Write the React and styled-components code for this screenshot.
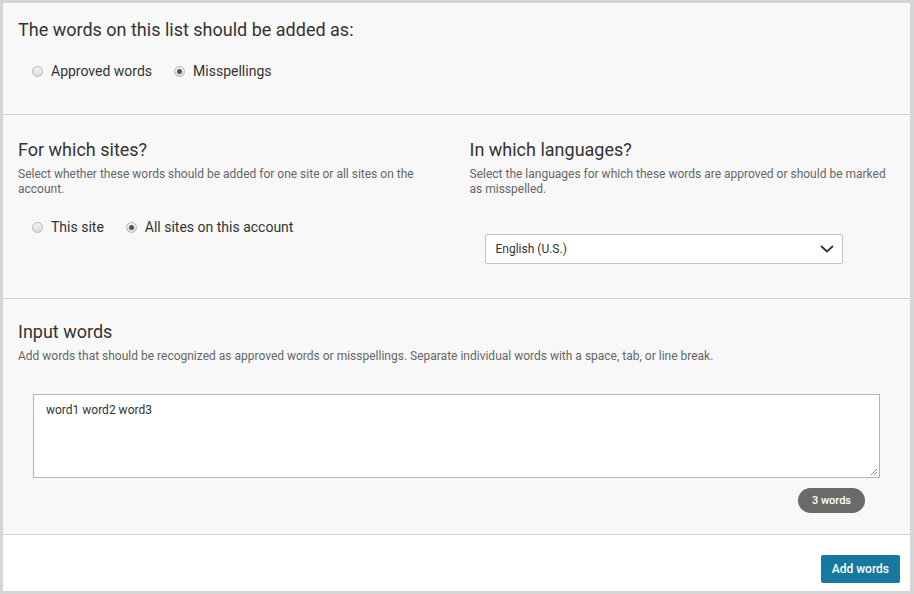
import React from "react";
import styled, { createGlobalStyle } from "styled-components";

const Global = createGlobalStyle`
  html, body { margin: 0; padding: 0; background: #d6d6d6; }
  body { font-family: Roboto, "Liberation Sans", sans-serif; color: #333; }
`;

const Frame = styled.div`
  width: 907px; height: 588px; margin: 3px;
  background: #f8f8f8; display: flex; flex-direction: column;
`;
const Section = styled.section`
  padding: ${p => p.$pad || "16px 15px 0"};
  height: ${p => p.$h}px; box-sizing: border-box;
  border-bottom: 1px solid #d2d2d2;
  display: ${p => (p.$cols ? "grid" : "block")};
  grid-template-columns: 1fr 1fr; column-gap: 60px;
`;
const Title = styled.h2`
  margin: 0; font-size: 18px; font-weight: 400; color: #333; line-height: 22px;
`;
const Desc = styled.p`
  margin: 6px 0 0; font-size: 12px; line-height: 15px; color: #666;
`;
const RadioRow = styled.div`
  display: flex; gap: 22px; padding-left: 14px; margin-top: ${p => p.$mt}px;
`;
const RadioLabel = styled.label`
  display: flex; align-items: center; gap: 8px; font-size: 14px; color: #333;
`;
const Dot = styled.span`
  width: 11px; height: 11px; border-radius: 50%; box-sizing: border-box;
  border: 1px solid #b8b8b8; background: linear-gradient(#f4f4f4, #dcdcdc);
  display: flex; align-items: center; justify-content: center;
  &::after { content: ""; width: 5px; height: 5px; border-radius: 50%;
    background: ${p => (p.$on ? "#555" : "transparent")}; }
`;
const Select = styled.div`
  margin: 38px 0 0 15px; width: 358px; height: 30px; box-sizing: border-box;
  border: 1px solid #c4c4c4; border-radius: 2px; background: #fff;
  display: flex; align-items: center; justify-content: space-between;
  padding: 0 8px 0 10px; font-size: 12px; color: #333;
`;
const TextArea = styled.div`
  margin: 30px 0 0 15px; width: 847px; height: 84px; box-sizing: border-box;
  border: 1px solid #b4b4b4; background: #fff; padding: 8px 12px;
  font-size: 12px; color: #333; position: relative;
`;
const Grip = styled.svg`position: absolute; right: 1px; bottom: 1px;`;
const CountRow = styled.div`display: flex; justify-content: flex-end; margin: 10px 30px 0 0;`;
const Pill = styled.span`
  background: #6a6a6a; color: #fff; font-size: 11px; font-weight: 500;
  height: 25px; padding: 0 14px; border-radius: 13px; display: flex; align-items: center;
`;
const Footer = styled.div`
  flex: 1; background: #fff; display: flex; justify-content: flex-end;
  align-items: flex-start; padding: 20px 10px 0 0;
`;
const Button = styled.button`
  background: #16799f; color: #fff; border: 0; border-radius: 2px;
  height: 28px; padding: 0 11px; font-family: inherit; font-size: 12px; font-weight: 500;
`;

const Radio = ({ on, children }) => (
  <RadioLabel><Dot $on={on} />{children}</RadioLabel>
);

export default function App() {
  return (
    <>
      <Global />
      <Frame>
        <Section $h={112}>
          <Title>The words on this list should be added as:</Title>
          <RadioRow $mt={22}>
            <Radio>Approved words</Radio>
            <Radio on>Misspellings</Radio>
          </RadioRow>
        </Section>
        <Section $h={184} $cols $pad="24px 15px 0">
          <div>
            <Title>For which sites?</Title>
            <Desc>Select whether these words should be added for one site or all sites on the account.</Desc>
            <RadioRow $mt={22}>
              <Radio>This site</Radio>
              <Radio on>All sites on this account</Radio>
            </RadioRow>
          </div>
          <div style={{ marginLeft: -17 }}>
            <Title>In which languages?</Title>
            <Desc>Select the languages for which these words are approved or should be marked as misspelled.</Desc>
            <Select style={{ marginTop: 37 }}>
              English (U.S.)
              <svg width="14" height="8" viewBox="0 0 14 8"><path d="M1 1l6 5.5L13 1" fill="none" stroke="#333" strokeWidth="1.8" /></svg>
            </Select>
          </div>
        </Section>
        <Section $h={236} $pad="22px 15px 0">
          <Title>Input words</Title>
          <Desc>Add words that should be recognized as approved words or misspellings. Separate individual words with a space, tab, or line break.</Desc>
          <TextArea>
            word1 word2 word3
            <Grip width="9" height="9" viewBox="0 0 9 9"><path d="M8 2L2 8M8 5L5 8" stroke="#888" strokeWidth="1" /></Grip>
          </TextArea>
          <CountRow><Pill>3 words</Pill></CountRow>
        </Section>
        <Footer><Button>Add words</Button></Footer>
      </Frame>
    </>
  );
}
